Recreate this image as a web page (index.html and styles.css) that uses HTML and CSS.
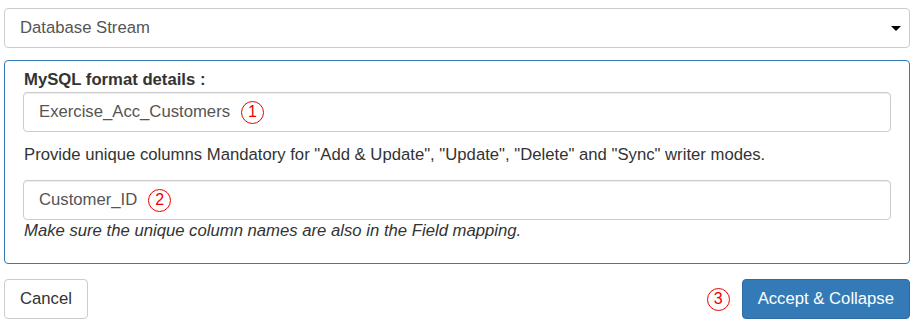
FILE: index.html
```html
<!DOCTYPE html>
<html lang="en">
<head>
    <meta charset="UTF-8">
    <title>Writer settings</title>
    <link rel="stylesheet" href="styles.css">
</head>
<body>
    <div id="app">
        <div class="select-box">
            <span>Database Stream</span>
            <span class="caret"></span>
        </div>

        <div class="details-panel">
            <div class="panel-title">MySQL format details :</div>
            <div class="text-field">
                <span>Exercise_Acc_Customers</span>
                <span class="marker">1</span>
            </div>
            <p class="help">Provide unique columns Mandatory for "Add &amp; Update", "Update", "Delete" and "Sync" writer modes.</p>
            <div class="text-field">
                <span>Customer_ID</span>
                <span class="marker">2</span>
            </div>
            <div class="note">Make sure the unique column names are also in the Field mapping.</div>
        </div>

        <div class="button-row">
            <button class="btn">Cancel</button>
            <div class="accept-group">
                <span class="marker">3</span>
                <button class="btn btn-primary">Accept &amp; Collapse</button>
            </div>
        </div>
    </div>
</body>
</html>
```

FILE: styles.css
```css
body {
    margin: 0;
    font-family: "Liberation Sans", Arial, sans-serif;
    font-size: 16.7px;
    color: #333;
    background-color: #fff;
}

#app {
    width: 906px;
    padding: 8px 0 0 4px;
}

.select-box {
    height: 38px;
    border: 1px solid #ccc;
    border-radius: 4px;
    display: flex;
    align-items: center;
    justify-content: space-between;
    padding: 0 8px 0 15px;
    color: #555;
}

.caret {
    width: 0;
    height: 0;
    border-left: 5px solid transparent;
    border-right: 5px solid transparent;
    border-top: 5px solid #000;
}

.details-panel {
    margin-top: 12px;
    border: 1px solid #337ab7;
    border-radius: 4px;
    padding: 9px 18px 21px 18px;
}

.panel-title {
    font-weight: bold;
    padding-left: 1px;
    line-height: 20px;
    margin-bottom: 2px;
}

.text-field {
    height: 38px;
    border: 1px solid #ccc;
    border-radius: 4px;
    display: flex;
    align-items: center;
    padding: 0 15px;
    color: #555;
    box-shadow: inset 0 1px 1px rgba(0, 0, 0, 0.075);
}

.marker {
    display: inline-flex;
    align-items: center;
    justify-content: center;
    width: 21px;
    height: 21px;
    border: 1.5px solid #e00;
    border-radius: 50%;
    color: #e00;
    font-size: 16px;
    margin-left: 11px;
}

.help {
    margin: 13px 0 15px 1px;
    line-height: 20px;
}

.note {
    font-style: italic;
    padding-left: 1px;
    line-height: 22px;
}

.button-row {
    margin-top: 15px;
    display: flex;
    justify-content: space-between;
    align-items: center;
}

.accept-group {
    display: flex;
    align-items: center;
}

.accept-group .marker {
    margin: 0 12px 0 0;
}

.btn {
    font-family: "Liberation Sans", Arial, sans-serif;
    font-size: 16.7px;
    height: 40px;
    padding: 0 15px;
    border: 1px solid #ccc;
    border-radius: 4px;
    background-color: #fff;
    color: #333;
    cursor: pointer;
}

.btn-primary {
    background-color: #337ab7;
    border-color: #2e6da4;
    color: #fff;
}
```
